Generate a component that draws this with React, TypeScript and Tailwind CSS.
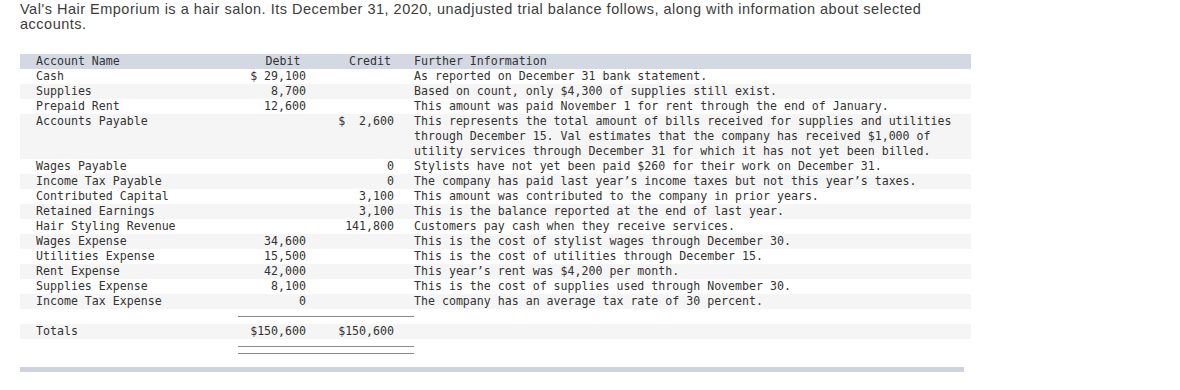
const ROWS = [
  { name: 'Cash', debit: '$ 29,100', credit: '', info: 'As reported on December 31 bank statement.' },
  { name: 'Supplies', debit: '8,700', credit: '', info: 'Based on count, only $4,300 of supplies still exist.' },
  { name: 'Prepaid Rent', debit: '12,600', credit: '', info: 'This amount was paid November 1 for rent through the end of January.' },
  {
    name: 'Accounts Payable',
    debit: '',
    credit: '$  2,600',
    info: 'This represents the total amount of bills received for supplies and utilities through December 15. Val estimates that the company has received $1,000 of utility services through December 31 for which it has not yet been billed.'
  },
  { name: 'Wages Payable', debit: '', credit: '0', info: 'Stylists have not yet been paid $260 for their work on December 31.' },
  { name: 'Income Tax Payable', debit: '', credit: '0', info: 'The company has paid last year\u2019s income taxes but not this year\u2019s taxes.' },
  { name: 'Contributed Capital', debit: '', credit: '3,100', info: 'This amount was contributed to the company in prior years.' },
  { name: 'Retained Earnings', debit: '', credit: '3,100', info: 'This is the balance reported at the end of last year.' },
  { name: 'Hair Styling Revenue', debit: '', credit: '141,800', info: 'Customers pay cash when they receive services.' },
  { name: 'Wages Expense', debit: '34,600', credit: '', info: 'This is the cost of stylist wages through December 30.' },
  { name: 'Utilities Expense', debit: '15,500', credit: '', info: 'This is the cost of utilities through December 15.' },
  { name: 'Rent Expense', debit: '42,000', credit: '', info: 'This year\u2019s rent was $4,200 per month.' },
  { name: 'Supplies Expense', debit: '8,100', credit: '', info: 'This is the cost of supplies used through November 30.' },
  { name: 'Income Tax Expense', debit: '0', credit: '', info: 'The company has an average tax rate of 30 percent.' }
]

const GRID = 'grid grid-cols-[218px_88px_88px_1fr]'

export default function App() {
  return (
    <div className="bg-white w-[1180px] h-[390px] overflow-hidden">
      <div className="ml-5 w-[951px] pt-[2px]">
        <p className="font-['Liberation_Sans',Arial,sans-serif] text-[14.5px] leading-[15px] tracking-[0.5px] text-[#3c3c3c]">
          Val's Hair Emporium is a hair salon. Its December 31, 2020, unadjusted trial balance follows, along with information about selected accounts.
        </p>

        <div className="mt-[22px] font-['DejaVu_Sans_Mono',monospace] text-[11.6px] leading-[15px] text-[#333] whitespace-pre">
          <div className={`${GRID} bg-[#d3d8e3] h-[15px]`}>
            <div className="pl-4">Account Name</div>
            <div className="text-center pl-[2px]">Debit</div>
            <div className="text-center">Credit</div>
            <div>Further Information</div>
          </div>

          {ROWS.map((r, i) => (
            <div key={r.name} className={`${GRID} ${i % 2 === 1 ? 'bg-[#f5f5f5]' : 'bg-white'}`}>
              <div className="pl-4">{r.name}</div>
              <div className="text-right pr-5">{r.debit}</div>
              <div className="text-right pr-5">{r.credit}</div>
              <div className="whitespace-normal pr-[10px]">{r.info}</div>
            </div>
          ))}

          <div className={`${GRID} h-[8px]`}>
            <div />
            <div className="border-b border-[#8a8a8a]" />
            <div className="border-b border-[#8a8a8a]" />
            <div />
          </div>
          <div className="h-[7px]" />

          <div className={`${GRID} bg-[#f5f5f5] h-[15px]`}>
            <div className="pl-4">Totals</div>
            <div className="text-right pr-5">$150,600</div>
            <div className="text-right pr-5">$150,600</div>
            <div />
          </div>

          <div className={`${GRID} h-[8px]`}>
            <div />
            <div className="border-b border-[#8a8a8a]" />
            <div className="border-b border-[#8a8a8a]" />
            <div />
          </div>
          <div className={`${GRID} h-[7px]`}>
            <div />
            <div className="border-b border-[#8a8a8a]" />
            <div className="border-b border-[#8a8a8a]" />
            <div />
          </div>

          <div className="mt-[13px] h-[5px] w-[944px] bg-[#cdd3df]" />
        </div>
      </div>
    </div>
  )
}
